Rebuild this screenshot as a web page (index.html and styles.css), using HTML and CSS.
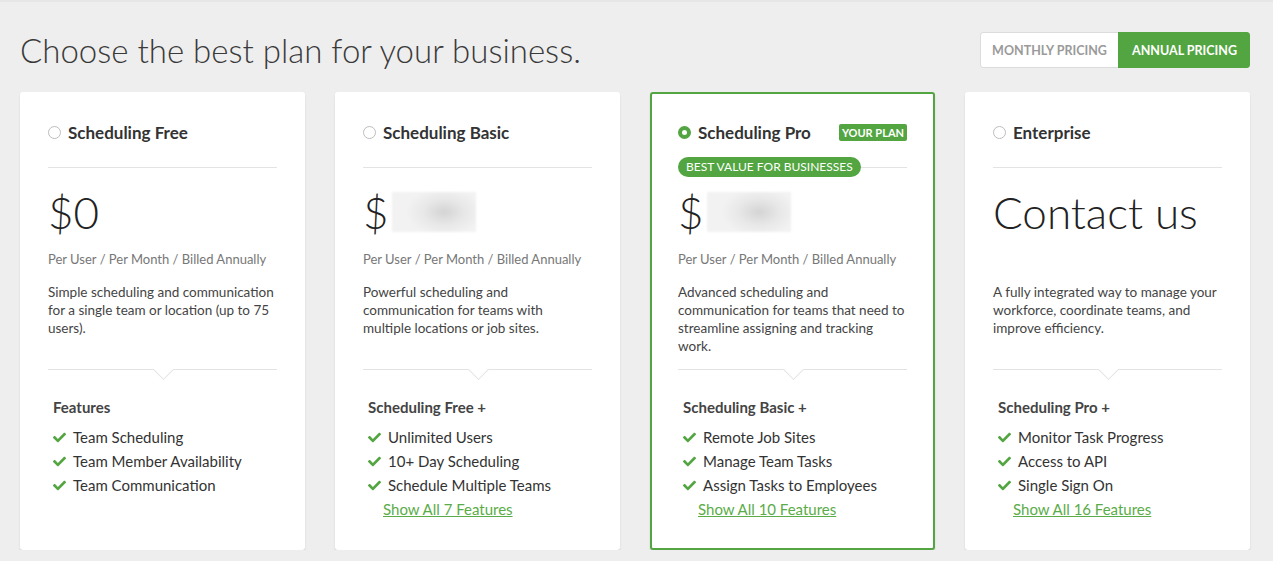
FILE: index.html
```html
<!DOCTYPE html>
<html lang="en">
<head>
<meta charset="utf-8">
<title>Choose the best plan</title>
<link rel="stylesheet" href="styles.css">
</head>
<body>
<div class="page">
  <header class="header">
    <h1 class="title">Choose the best plan for your business.</h1>
    <div class="toggle">
      <button class="toggle-btn">Monthly Pricing</button>
      <button class="toggle-btn active">Annual Pricing</button>
    </div>
  </header>

  <main class="plans">
    <section class="card">
      <div class="card-head">
        <span class="radio"></span>
        <h2 class="plan-name">Scheduling Free</h2>
      </div>
      <div class="divider"><span class="rule"></span></div>
      <div class="price">$0</div>
      <div class="per">Per User / Per Month / Billed Annually</div>
      <p class="desc">Simple scheduling and communication for a single team or location (up to 75 users).</p>
      <div class="notch"></div>
      <div class="features">
        <h3 class="feat-title">Features</h3>
        <ul class="feat-list">
          <li><svg class="check" viewBox="0 40 512 432"><path d="M173.9 439.4l-166.4-166.4c-10-10-10-26.2 0-36.2l36.2-36.2c10-10 26.2-10 36.2 0L192 312.7 432.1 72.6c10-10 26.2-10 36.2 0l36.2 36.2c10 10 10 26.2 0 36.2l-294.4 294.4c-10 10-26.2 10-36.2 0z"/></svg>Team Scheduling</li>
          <li><svg class="check" viewBox="0 40 512 432"><path d="M173.9 439.4l-166.4-166.4c-10-10-10-26.2 0-36.2l36.2-36.2c10-10 26.2-10 36.2 0L192 312.7 432.1 72.6c10-10 26.2-10 36.2 0l36.2 36.2c10 10 10 26.2 0 36.2l-294.4 294.4c-10 10-26.2 10-36.2 0z"/></svg>Team Member Availability</li>
          <li><svg class="check" viewBox="0 40 512 432"><path d="M173.9 439.4l-166.4-166.4c-10-10-10-26.2 0-36.2l36.2-36.2c10-10 26.2-10 36.2 0L192 312.7 432.1 72.6c10-10 26.2-10 36.2 0l36.2 36.2c10 10 10 26.2 0 36.2l-294.4 294.4c-10 10-26.2 10-36.2 0z"/></svg>Team Communication</li>
        </ul>
      </div>
    </section>

    <section class="card">
      <div class="card-head">
        <span class="radio"></span>
        <h2 class="plan-name">Scheduling Basic</h2>
      </div>
      <div class="divider"><span class="rule"></span></div>
      <div class="price">$<span class="blur"></span></div>
      <div class="per">Per User / Per Month / Billed Annually</div>
      <p class="desc">Powerful scheduling and communication for teams with multiple locations or job sites.</p>
      <div class="notch"></div>
      <div class="features">
        <h3 class="feat-title">Scheduling Free +</h3>
        <ul class="feat-list">
          <li><svg class="check" viewBox="0 40 512 432"><path d="M173.9 439.4l-166.4-166.4c-10-10-10-26.2 0-36.2l36.2-36.2c10-10 26.2-10 36.2 0L192 312.7 432.1 72.6c10-10 26.2-10 36.2 0l36.2 36.2c10 10 10 26.2 0 36.2l-294.4 294.4c-10 10-26.2 10-36.2 0z"/></svg>Unlimited Users</li>
          <li><svg class="check" viewBox="0 40 512 432"><path d="M173.9 439.4l-166.4-166.4c-10-10-10-26.2 0-36.2l36.2-36.2c10-10 26.2-10 36.2 0L192 312.7 432.1 72.6c10-10 26.2-10 36.2 0l36.2 36.2c10 10 10 26.2 0 36.2l-294.4 294.4c-10 10-26.2 10-36.2 0z"/></svg>10+ Day Scheduling</li>
          <li><svg class="check" viewBox="0 40 512 432"><path d="M173.9 439.4l-166.4-166.4c-10-10-10-26.2 0-36.2l36.2-36.2c10-10 26.2-10 36.2 0L192 312.7 432.1 72.6c10-10 26.2-10 36.2 0l36.2 36.2c10 10 10 26.2 0 36.2l-294.4 294.4c-10 10-26.2 10-36.2 0z"/></svg>Schedule Multiple Teams</li>
        </ul>
        <a class="show-all" href="#">Show All 7 Features</a>
      </div>
    </section>

    <section class="card card-pro">
      <div class="card-head">
        <span class="radio radio-on"></span>
        <h2 class="plan-name">Scheduling Pro</h2>
        <span class="your-plan">Your Plan</span>
      </div>
      <div class="divider"><span class="pill">Best Value for Businesses</span><span class="rule"></span></div>
      <div class="price">$<span class="blur"></span></div>
      <div class="per">Per User / Per Month / Billed Annually</div>
      <p class="desc">Advanced scheduling and communication for teams that need to streamline assigning and tracking work.</p>
      <div class="notch"></div>
      <div class="features">
        <h3 class="feat-title">Scheduling Basic +</h3>
        <ul class="feat-list">
          <li><svg class="check" viewBox="0 40 512 432"><path d="M173.9 439.4l-166.4-166.4c-10-10-10-26.2 0-36.2l36.2-36.2c10-10 26.2-10 36.2 0L192 312.7 432.1 72.6c10-10 26.2-10 36.2 0l36.2 36.2c10 10 10 26.2 0 36.2l-294.4 294.4c-10 10-26.2 10-36.2 0z"/></svg>Remote Job Sites</li>
          <li><svg class="check" viewBox="0 40 512 432"><path d="M173.9 439.4l-166.4-166.4c-10-10-10-26.2 0-36.2l36.2-36.2c10-10 26.2-10 36.2 0L192 312.7 432.1 72.6c10-10 26.2-10 36.2 0l36.2 36.2c10 10 10 26.2 0 36.2l-294.4 294.4c-10 10-26.2 10-36.2 0z"/></svg>Manage Team Tasks</li>
          <li><svg class="check" viewBox="0 40 512 432"><path d="M173.9 439.4l-166.4-166.4c-10-10-10-26.2 0-36.2l36.2-36.2c10-10 26.2-10 36.2 0L192 312.7 432.1 72.6c10-10 26.2-10 36.2 0l36.2 36.2c10 10 10 26.2 0 36.2l-294.4 294.4c-10 10-26.2 10-36.2 0z"/></svg>Assign Tasks to Employees</li>
        </ul>
        <a class="show-all" href="#">Show All 10 Features</a>
      </div>
    </section>

    <section class="card">
      <div class="card-head">
        <span class="radio"></span>
        <h2 class="plan-name">Enterprise</h2>
      </div>
      <div class="divider"><span class="rule"></span></div>
      <div class="price">Contact us</div>
      <div class="per">&nbsp;</div>
      <p class="desc">A fully integrated way to manage your workforce, coordinate teams, and improve efficiency.</p>
      <div class="notch"></div>
      <div class="features">
        <h3 class="feat-title">Scheduling Pro +</h3>
        <ul class="feat-list">
          <li><svg class="check" viewBox="0 40 512 432"><path d="M173.9 439.4l-166.4-166.4c-10-10-10-26.2 0-36.2l36.2-36.2c10-10 26.2-10 36.2 0L192 312.7 432.1 72.6c10-10 26.2-10 36.2 0l36.2 36.2c10 10 10 26.2 0 36.2l-294.4 294.4c-10 10-26.2 10-36.2 0z"/></svg>Monitor Task Progress</li>
          <li><svg class="check" viewBox="0 40 512 432"><path d="M173.9 439.4l-166.4-166.4c-10-10-10-26.2 0-36.2l36.2-36.2c10-10 26.2-10 36.2 0L192 312.7 432.1 72.6c10-10 26.2-10 36.2 0l36.2 36.2c10 10 10 26.2 0 36.2l-294.4 294.4c-10 10-26.2 10-36.2 0z"/></svg>Access to API</li>
          <li><svg class="check" viewBox="0 40 512 432"><path d="M173.9 439.4l-166.4-166.4c-10-10-10-26.2 0-36.2l36.2-36.2c10-10 26.2-10 36.2 0L192 312.7 432.1 72.6c10-10 26.2-10 36.2 0l36.2 36.2c10 10 10 26.2 0 36.2l-294.4 294.4c-10 10-26.2 10-36.2 0z"/></svg>Single Sign On</li>
        </ul>
        <a class="show-all" href="#">Show All 16 Features</a>
      </div>
    </section>
  </main>
</div>
</body>
</html>
```

FILE: styles.css
```css
* { box-sizing: border-box; }

html, body {
  margin: 0;
  padding: 0;
}

body {
  background: #eeeeee;
  font-family: "Lato", "Open Sans", "Liberation Sans", sans-serif;
  color: #333;
  border-top: 2px solid #e6e6e6;
}

.page {
  padding: 0 23px 0 20px;
}

.header {
  display: flex;
  align-items: center;
  justify-content: space-between;
  padding-top: 6px;
  height: 90px;
}

.title {
  margin: 0;
  font-size: 33px;
  font-weight: 300;
  color: #3a3a3a;
  line-height: 40px;
}

.toggle {
  display: flex;
  height: 36px;
  border-radius: 3px;
  overflow: hidden;
}

.toggle-btn {
  font-family: inherit;
  font-size: 12.5px;
  font-weight: 700;
  text-transform: uppercase;
  white-space: nowrap;
  border: 1px solid #dcdcdc;
  border-right: none;
  background: #fff;
  color: #9a9a9a;
  padding: 0;
  border-radius: 3px 0 0 3px;
  width: 138px;
}

.toggle-btn.active {
  background: #52a540;
  border-color: #52a540;
  color: #fff;
  border-radius: 0 3px 3px 0;
  width: 132px;
}

.plans {
  display: flex;
  gap: 30px;
}

.card {
  flex: 0 0 285px;
  min-height: 458px;
  background: #fff;
  border-radius: 3px;
  box-shadow: 0 2px 2px rgba(0,0,0,0.12);
  padding: 28px 28px 20px;
}

.card-pro {
  border: 2px solid #52a540;
  padding: 26px 26px 18px;
}

.card-head {
  display: flex;
  align-items: center;
  height: 24px;
}

.radio {
  width: 13px;
  height: 13px;
  border-radius: 50%;
  border: 1px solid #bdbdbd;
  margin-right: 7px;
  flex: none;
}

.radio-on {
  border: 4px solid #52a540;
  background: #fff;
}

.plan-name {
  margin: 0;
  font-size: 17px;
  font-weight: 700;
  color: #333;
  flex: 1;
}

.your-plan {
  background: #52a540;
  color: #fff;
  font-size: 11px;
  font-weight: 700;
  text-transform: uppercase;
  line-height: 17px;
  padding: 0 3px;
  border-radius: 2px;
}

.divider {
  display: flex;
  align-items: center;
  height: 20px;
  margin-top: 13px;
}

.rule {
  flex: 1;
  height: 1px;
  background: #e3e3e3;
}

.pill {
  background: #52a540;
  color: #fff;
  font-size: 12px;
  text-transform: uppercase;
  line-height: 20px;
  padding: 0 8px;
  border-radius: 10px;
}

.price {
  margin-top: 9px;
  font-size: 44px;
  font-weight: 300;
  line-height: 52px;
  height: 52px;
  color: #222;
  display: flex;
  align-items: center;
}

.blur {
  display: inline-block;
  width: 84px;
  height: 40px;
  margin-left: 3px;
  background: radial-gradient(ellipse 45% 60% at 62% 50%, #d4d4d4 0%, #e8e8e8 55%, #f2f2f2 100%);
  filter: blur(1px);
}

.per {
  margin-top: 12px;
  font-size: 13px;
  color: #777;
  line-height: 18px;
}

.desc {
  margin: 15px 0 0;
  font-size: 13.5px;
  line-height: 18px;
  color: #444;
  min-height: 72px;
}

.notch {
  position: relative;
  height: 1px;
  background: #e3e3e3;
  margin-top: 14px;
}

.notch::after {
  content: "";
  position: absolute;
  left: 50%;
  top: -7px;
  width: 14px;
  height: 14px;
  margin-left: -7px;
  background: #fff;
  border-right: 1px solid #e3e3e3;
  border-bottom: 1px solid #e3e3e3;
  transform: rotate(45deg);
}

.features {
  padding: 25px 0 0 5px;
}

.feat-title {
  margin: 0;
  font-size: 15px;
  font-weight: 700;
  color: #444;
  line-height: 24px;
}

.feat-list {
  list-style: none;
  margin: 6px 0 0;
  padding: 0;
}

.feat-list li {
  font-size: 15px;
  line-height: 24px;
  color: #333;
  display: flex;
  align-items: center;
}

.check {
  width: 13px;
  height: 11px;
  margin-right: 7px;
  fill: #52a540;
  flex: none;
}

.show-all {
  display: block;
  margin-left: 15px;
  font-size: 15px;
  line-height: 24px;
  color: #5aac48;
  text-decoration: underline;
}
```
